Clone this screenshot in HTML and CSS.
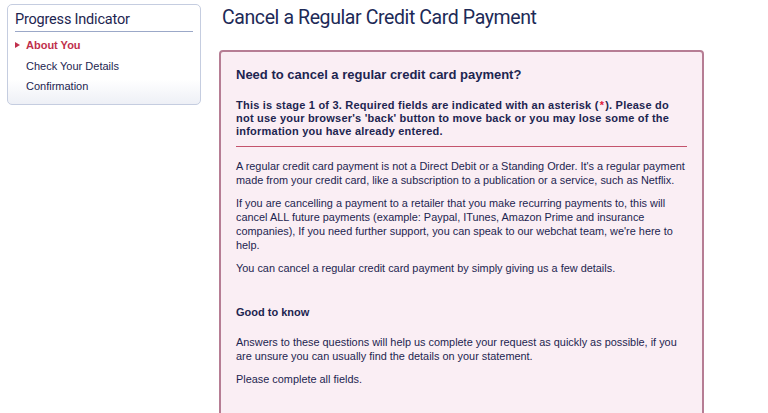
FILE: index.html
```html
<!doctype html>
<html>
    <head>
        <link rel="stylesheet" href="styles.css">
    </head>
    <body>
        <div class="page">
            <div class="progress">
                <h2>Progress Indicator</h2>
                <ul>
                    <li class="current">About You</li>
                    <li>Check Your Details</li>
                    <li>Confirmation</li>
                </ul>
            </div>
            <div class="content">
                <h1>Cancel a Regular Credit Card Payment</h1>
                <div class="panel">
                    <h3>Need to cancel a regular credit card payment?</h3>
                    <p class="stage">This is stage 1 of 3. Required fields are indicated with an asterisk (<span class="req">*</span>). Please do not use your browser's 'back' button to move back or you may lose some of the information you have already entered.</p>
                    <div class="rule"></div>
                    <p>A regular credit card payment is not a Direct Debit or a Standing Order. It's a regular payment made from your credit card, like a subscription to a publication or a service, such as Netflix.</p>
                    <p>If you are cancelling a payment to a retailer that you make recurring payments to, this will cancel ALL future payments (example: Paypal, ITunes, Amazon Prime and insurance companies), If you need further support, you can speak to our webchat team, we're here to help.</p>
                    <p>You can cancel a regular credit card payment by simply giving us a few details.</p>
                    <h4>Good to know</h4>
                    <p>Answers to these questions will help us complete your request as quickly as possible, if you are unsure you can usually find the details on your statement.</p>
                    <p>Please complete all fields.</p>
                </div>
            </div>
        </div>
    </body>
</html>
```

FILE: styles.css
```css
body {
    margin: 0;
    background: #fff;
    color: #1d2550;
    font-family: "Liberation Sans", Arial, sans-serif;
}
.page {
    display: flex;
    align-items: flex-start;
    padding: 4px 0 0 7px;
}
.progress {
    width: 194px;
    box-sizing: border-box;
    border: 1px solid #c5cde0;
    border-radius: 5px;
    padding: 5px 7px 7px;
    background: linear-gradient(#fff 75%, #eef0f6);
}
.progress h2 {
    margin: 0;
    font-family: "Roboto", sans-serif;
    font-weight: normal;
    font-size: 14.5px;
    letter-spacing: -0.2px;
    line-height: 20px;
    padding-bottom: 1px;
    border-bottom: 1px solid #9ba8c8;
}
.progress ul {
    list-style: none;
    margin: 0;
    padding: 3px 0 0 11px;
    font-size: 11px;
}
.progress li {
    line-height: 20.5px;
    position: relative;
}
.progress li.current {
    color: #c0304c;
    font-weight: bold;
}
.progress li.current::before {
    content: '';
    position: absolute;
    left: -11px;
    top: 7px;
    border-left: 5px solid #c0304c;
    border-top: 3px solid transparent;
    border-bottom: 3px solid transparent;
}
.content {
    margin-left: 18px;
    width: 485px;
}
.content h1 {
    margin: 0 0 18px 3px;
    font-family: "Roboto", sans-serif;
    font-weight: normal;
    font-size: 19.5px;
    letter-spacing: -0.4px;
    line-height: 28px;
    color: #1d2a57;
}
.panel {
    border: 2px solid #b67d94;
    border-radius: 4px;
    background: #faeef4;
    padding: 15px 13px 60px 15px;
    font-size: 10.9px;
    line-height: 14px;
}
.panel h3 {
    margin: 0 0 16px;
    font-size: 13px;
    line-height: 16px;
}
.panel .stage {
    margin: 0 0 8px;
    font-weight: bold;
    font-size: 11px;
    letter-spacing: 0.22px;
    line-height: 13px;
}
.req {
    color: #e0203a;
    padding: 0 1px;
}
.rule {
    height: 1px;
    background: #c4536c;
    margin: 0 2px 12px 0;
}
.panel p {
    margin: 0 0 9px;
}
.panel h4 {
    margin: 30px 0 16px;
    font-size: 11px;
    line-height: 14px;
}
```
